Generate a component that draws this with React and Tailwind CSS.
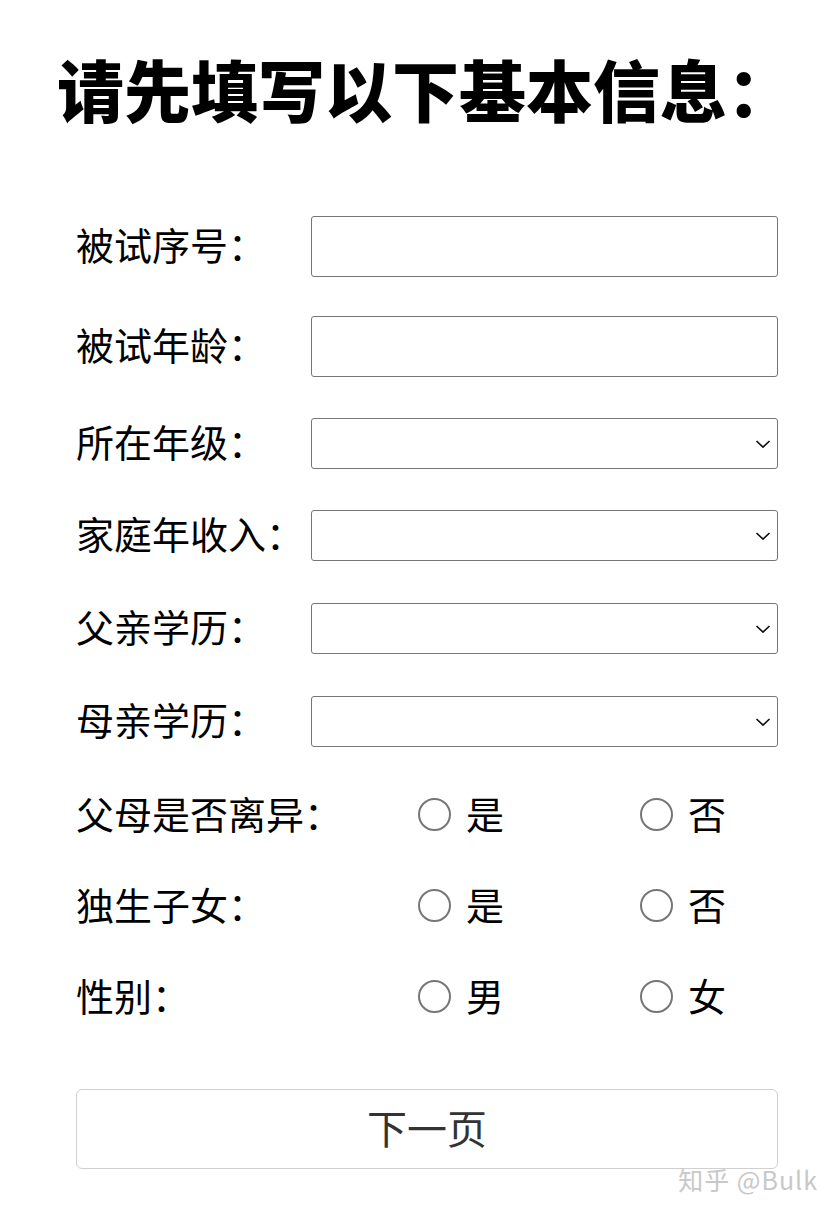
const FONT = { fontFamily: '"Noto Sans CJK SC", "Noto Sans", sans-serif' }

const Chevron = () => (
  <svg
    viewBox="0 0 16 9"
    className="pointer-events-none absolute right-[7px] top-1/2 h-[9px] w-[16px] -translate-y-1/2"
    fill="none"
    stroke="#111"
    strokeWidth="1.7"
  >
    <path d="M1.5 1.5l6.5 6 6.5-6" />
  </svg>
)

const Label = ({ children, wide }) => (
  <div className={`${wide ? 'w-[342px]' : 'w-[235px]'} shrink-0 pb-[5px] text-[38px] leading-none text-black`}>
    {children}
  </div>
)

const TextRow = ({ label, className }) => (
  <div className={`flex h-[61px] items-center ${className}`}>
    <Label>{label}</Label>
    <input
      type="text"
      className="h-full flex-1 rounded-[3px] border border-[#767676] bg-white px-2 text-[28px] outline-none"
    />
  </div>
)

const SelectRow = ({ label, className }) => (
  <div className={`flex h-[51px] items-center ${className}`}>
    <Label>{label}</Label>
    <div className="relative h-full flex-1">
      <select className="h-full w-full appearance-none rounded-[3px] border border-[#767676] bg-white px-2 text-[24px] outline-none">
        <option value=""></option>
      </select>
      <Chevron />
    </div>
  </div>
)

const Radio = ({ text }) => (
  <label className="flex w-[222px] shrink-0 items-center">
    <span className="mb-[2px] box-border h-[33px] w-[33px] shrink-0 rounded-full border-2 border-[#767676] bg-white" />
    <span className="ml-[15px] pb-[5px] text-[38px] leading-none text-black">{text}</span>
  </label>
)

const RadioRow = ({ label, options, className }) => (
  <div className={`flex h-[52px] items-center ${className}`}>
    <Label wide>{label}</Label>
    {options.map((o) => (
      <Radio key={o} text={o} />
    ))}
  </div>
)

export default function App() {
  return (
    <div className="relative h-[1217px] w-[839px] overflow-hidden bg-white" style={FONT}>
      <h1 className="pl-[57px] pt-[54px] text-[67px] font-black leading-none text-black">
        请先填写以下基本信息：
      </h1>
      <div className="pl-[76px] pr-[61px]">
        <TextRow label="被试序号：" className="mt-[95px]" />
        <TextRow label="被试年龄：" className="mt-[39px]" />
        <SelectRow label="所在年级：" className="mt-[41px]" />
        <SelectRow label="家庭年收入：" className="mt-[41px]" />
        <SelectRow label="父亲学历：" className="mt-[42px]" />
        <SelectRow label="母亲学历：" className="mt-[42px]" />
        <RadioRow label="父母是否离异：" options={['是', '否']} className="mt-[42px]" />
        <RadioRow label="独生子女：" options={['是', '否']} className="mt-[39px]" />
        <RadioRow label="性别：" options={['男', '女']} className="mt-[39px]" />
        <button
          type="button"
          className="mt-[66px] flex h-[80px] w-full items-center justify-center rounded-[6px] border border-[#d0d0d0] bg-white pb-[4px] text-[40px] leading-none text-[#333]"
        >
          下一页
        </button>
      </div>
      <div className="absolute right-[21px] top-[1167px] text-[25px] leading-none tracking-[1px] text-[#c8c8c8]">
        知乎 @Bulk
      </div>
    </div>
  )
}
